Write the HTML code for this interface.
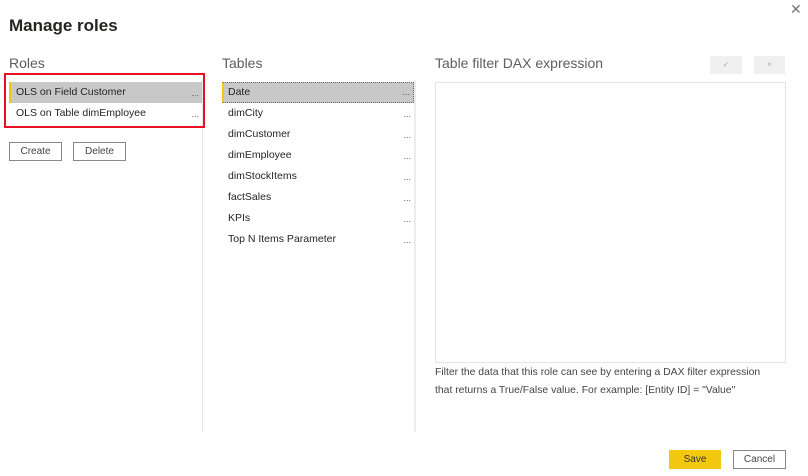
<!DOCTYPE html>
<html><head><style>
body{margin:0;width:808px;height:476px;background:#fff;font-family:"Liberation Sans",sans-serif;position:relative;overflow:hidden;color:#252423}
.a{position:absolute}
.row{position:absolute;height:21px;font-size:10.5px;line-height:21px;box-sizing:border-box;padding-left:7px}
.dots{position:absolute;right:3px;top:1px;font-size:9px;color:#555}
.h{font-size:14px;color:#605e5c}
.btn{position:absolute;border:1px solid #8a8886;background:#fff;font-size:10px;text-align:center;box-sizing:border-box;line-height:17px;color:#444}
</style></head><body>
<div class="a" style="left:9px;top:16px;font-size:17px;font-weight:bold;color:#252423">Manage roles</div>
<div class="a" style="left:790px;top:1px;font-size:14px;color:#777;font-weight:300">✕</div>
<div class="a h" style="left:9px;top:55px">Roles</div>
<div class="a h" style="left:222px;top:55px">Tables</div>
<div class="a h" style="left:435px;top:55px">Table filter DAX expression</div>
<div class="a" style="left:710px;top:56px;width:32px;height:18px;background:#f0f0f0;color:#aaa;font-size:8px;text-align:center;line-height:18px">✓</div>
<div class="a" style="left:754px;top:56px;width:31px;height:18px;background:#f0f0f0;color:#aaa;font-size:8px;text-align:center;line-height:18px">×</div>
<div class="a" style="left:202px;top:80px;width:1px;height:352px;background:#e8e8e8"></div>
<div class="a" style="left:414px;top:80px;width:2px;height:352px;background:#ececec"></div>
<div class="a" style="left:435px;top:82px;width:351px;height:281px;border:1px solid #e3e3e3;box-sizing:border-box"></div>
<div class="row" style="left:9px;top:82px;width:193px;background:#c8c8c8;border-left:2px solid #f2c811;padding-left:5px">OLS on Field Customer<span class="dots">...</span></div>
<div class="row" style="left:9px;top:103px;width:193px">OLS on Table dimEmployee<span class="dots">...</span></div>
<div class="a" style="left:4px;top:73px;width:201px;height:55px;border:2px solid #e81123;box-sizing:border-box"></div>
<div class="btn" style="left:9px;top:142px;width:53px;height:19px">Create</div>
<div class="btn" style="left:73px;top:142px;width:53px;height:19px">Delete</div>
<div class="row" style="left:222px;top:82px;width:192px;background:#c8c8c8;border:1px dotted #666;border-left:2px solid #f2c811;padding-left:4px;line-height:19px">Date<span class="dots" style="top:0">...</span></div>
<div class="row" style="left:222px;top:103px;width:192px;padding-left:6px">dimCity<span class="dots">...</span></div>
<div class="row" style="left:222px;top:124px;width:192px;padding-left:6px">dimCustomer<span class="dots">...</span></div>
<div class="row" style="left:222px;top:145px;width:192px;padding-left:6px">dimEmployee<span class="dots">...</span></div>
<div class="row" style="left:222px;top:166px;width:192px;padding-left:6px">dimStockItems<span class="dots">...</span></div>
<div class="row" style="left:222px;top:187px;width:192px;padding-left:6px">factSales<span class="dots">...</span></div>
<div class="row" style="left:222px;top:208px;width:192px;padding-left:6px">KPIs<span class="dots">...</span></div>
<div class="row" style="left:222px;top:229px;width:192px;padding-left:6px">Top N Items Parameter<span class="dots">...</span></div>
<div class="a" style="left:435px;top:364px;font-size:10.4px;line-height:17.5px;color:#444;width:370px">Filter the data that this role can see by entering a DAX filter expression<br>that returns a True/False value. For example: [Entity ID] = "Value"</div>
<div class="a" style="left:669px;top:450px;width:52px;height:19px;background:#f2c811;font-size:10px;text-align:center;line-height:19px;color:#333">Save</div>
<div class="btn" style="left:733px;top:450px;width:53px;height:19px">Cancel</div>
</body></html>
